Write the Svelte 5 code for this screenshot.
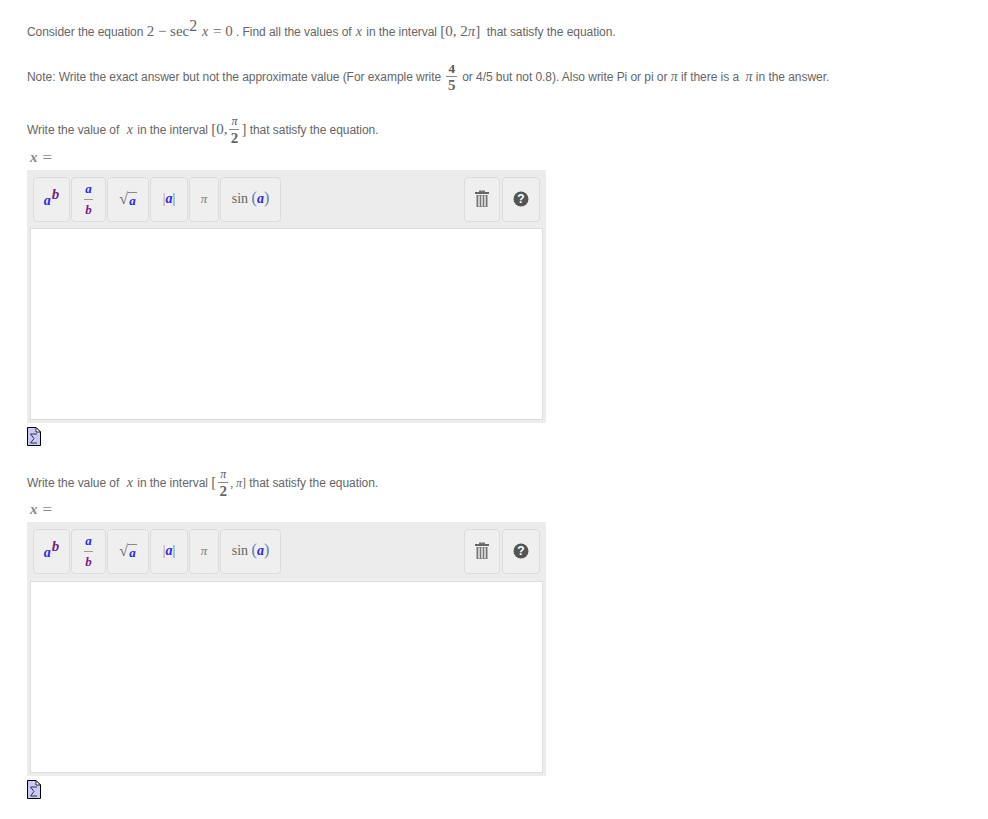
<script>
	const tools = [
		{ id: 'power', w: 37 },
		{ id: 'frac', w: 35 },
		{ id: 'sqrt', w: 42 },
		{ id: 'abs', w: 38 },
		{ id: 'pi', w: 30 },
		{ id: 'sin', w: 61 }
	];
</script>

{#snippet frac(top, bottom, it)}
	<span class="frac"><span class="num" class:it>{top}</span><span class="den">{bottom}</span></span>
{/snippet}

{#snippet editor()}
	<div class="var"><i class="vx">x</i><span class="eq">=</span></div>
	<div class="panel">
		<div class="toolbar">
			{#each tools as t}
				<button class="tool" style="width: {t.w}px">
					{#if t.id === 'power'}
						<span class="power"><i class="blue">a</i><i class="purple sup">b</i></span>
					{:else if t.id === 'frac'}
						<span class="tfrac"><i class="blue">a</i><i class="purple">b</i></span>
					{:else if t.id === 'sqrt'}
						<span class="root"><span class="radical">√</span><i class="blue over">a</i></span>
					{:else if t.id === 'abs'}
						<span class="abs"><span class="orange">|</span><i class="blue">a</i><span class="grey">|</span></span>
					{:else if t.id === 'pi'}
						<i class="pi">π</i>
					{:else}
						<span class="sin">sin <span class="paren">(</span><i class="blue">a</i><span class="paren">)</span></span>
					{/if}
				</button>
			{/each}
			<div class="right">
				<button class="tool side">
					<svg width="16" height="18" viewBox="0 0 16 18">
						<path d="M5 0.5h6v1.5H5z" fill="#777" />
						<rect x="1" y="2" width="14" height="2" fill="#666" />
						<rect x="2.5" y="5" width="11" height="12" fill="#777" />
						<path d="M5 5.5v11M8 5.5v11M11 5.5v11" stroke="#efefef" stroke-width="1.4" />
					</svg>
				</button>
				<button class="tool side help">
					<svg width="16" height="16" viewBox="0 0 16 16">
						<circle cx="8" cy="8" r="7.5" fill="#555" />
						<text x="8" y="12.2" text-anchor="middle" class="qm">?</text>
					</svg>
				</button>
			</div>
		</div>
		<div class="input"></div>
	</div>
	<svg class="sigma" width="14" height="19" viewBox="0 0 14 19">
		<path d="M.5 .5h8.5l4.5 4.5v13.5H.5z" fill="#c9c9f5" stroke="#000" />
		<path d="M9 .5v4.5h4.5z" fill="#fff" stroke="#000" stroke-width=".8" />
		<path d="M10 7H3.5l3.5 4.5-3.5 4.5H10" fill="none" stroke="#334" />
	</svg>
{/snippet}

<main>
	<p class="line first">
		Consider the equation <span class="math big">2 − sec<sup>2</sup> <i class="mi">x</i> = 0</span> . Find all the values of <i class="mi">x</i> in the interval <span class="math big">[0, 2<i>π</i>]</span> &nbsp;that satisfy the equation.
	</p>
	<p class="line note">
		Note: Write the exact answer but not the approximate value (For example write {@render frac('4', '5', false)} or 4/5 but not 0.8). Also write Pi or pi or <i class="mi">π</i> if there is a &nbsp;<i class="mi">π</i> in the answer.
	</p>
	<p class="line ask">
		Write the value of &nbsp;<i class="mi">x</i> in the interval <span class="math big">[0,</span>{@render frac('π', '2', true)}<span class="math big">]</span> that satisfy the equation.
	</p>
	{@render editor()}
	<p class="line ask second">
		Write the value of &nbsp;<i class="mi">x</i> in the interval <span class="math big">[</span>{@render frac('π', '2', true)}<span class="math">, <i>π</i>]</span> that satisfy the equation.
	</p>
	<div class="lower">
		{@render editor()}
	</div>
</main>

<style>
	:global(body) {
		margin: 0;
		background: #fff;
	}
	main {
		padding: 0 0 0 27px;
		font-family: "Liberation Sans", Arial, sans-serif;
		font-size: 12px;
		letter-spacing: -0.05px;
		color: #666;
	}
	.line {
		margin: 0;
		height: 20px;
		line-height: 20px;
		white-space: nowrap;
	}
	.first {
		padding-top: 21px;
	}
	.note {
		margin-top: 26px;
	}
	.note .mi {
		padding: 0;
	}
	.ask {
		margin-top: 32px;
	}
	.second {
		margin-top: 26px;
		height: 19px;
	}
	.math {
		font-family: "Liberation Serif", serif;
	}
	.big {
		font-size: 15px;
		letter-spacing: 0;
		font-weight: 400;
	}
	.big sup {
		font-size: 16px;
		line-height: 0;
		vertical-align: 5px;
	}
	.mi {
		font-family: "Liberation Serif", serif;
		font-style: italic;
		font-size: 14px;
		padding: 0 1px;
	}
	.frac {
		display: inline-flex;
		flex-direction: column;
		align-items: center;
		vertical-align: middle;
		font-family: "Liberation Serif", serif;
		margin: -6px 2px -6px 2px;
		color: #555;
	}
	.num {
		border-bottom: 1px solid #888;
		padding: 0 2px 1px;
		font-size: 13px;
		line-height: 13px;
		font-weight: 700;
	}
	.num.it {
		font-size: 12px;
		font-style: italic;
		font-weight: 400;
	}
	.den {
		font-size: 15px;
		line-height: 15px;
		padding-top: 1px;
		font-weight: 700;
		color: #666;
	}
	.var {
		margin-top: 10px;
		height: 20px;
		line-height: 16px;
		font-size: 13px;
		color: #888;
		padding-left: 3px;
		font-family: "Liberation Serif", serif;
	}
	.vx {
		font-size: 15px;
		font-weight: 700;
	}
	.eq {
		font-size: 17px;
		margin-left: 5px;
		vertical-align: -1px;
	}
	.panel {
		width: 519px;
		height: 253px;
		margin-top: 1px;
		background: #ececec;
		box-sizing: border-box;
		padding: 7px 3px 3px;
	}
	.lower .panel {
		height: 254px;
	}
	.lower .input {
		margin-top: 7px;
	}
	.toolbar {
		display: flex;
		gap: 1px;
		height: 45px;
		padding-left: 3px;
		padding-right: 3px;
	}
	.tool {
		height: 45px;
		padding: 0 0 2px;
		border: 1px solid #dcdcdc;
		border-radius: 4px;
		background: #efefef;
		display: flex;
		align-items: center;
		justify-content: center;
		font-family: "Liberation Serif", serif;
		font-size: 14px;
		color: #666;
	}
	.right {
		margin-left: auto;
		display: flex;
		gap: 2px;
	}
	.side {
		width: 36px;
	}
	.help {
		width: 38px;
	}
	.qm {
		font-family: "Liberation Sans", sans-serif;
		font-size: 12px;
		font-weight: 700;
		fill: #fff;
	}
	.blue {
		color: #2a2af0;
		font-weight: 700;
	}
	.purple {
		color: #7a1f8a;
		font-weight: 700;
	}
	.orange {
		color: #c98a3a;
	}
	.grey {
		color: #666;
	}
	.power {
		position: relative;
		top: 2px;
		white-space: nowrap;
	}
	.power i:first-child {
		font-size: 14px;
		margin-right: 1px;
	}
	.sup {
		font-size: 15px;
		position: relative;
		top: -6px;
	}
	.tfrac {
		display: flex;
		flex-direction: column;
		align-items: center;
		font-size: 13px;
		line-height: 13px;
	}
	.tfrac i:first-child {
		border-bottom: 1px solid #999;
		padding: 0 1px 4px;
		margin-bottom: 3px;
	}
	.root {
		font-size: 13px;
		display: flex;
		align-items: flex-end;
	}
	.radical {
		color: #666;
		font-size: 16px;
		line-height: 18px;
	}
	.over {
		border-top: 1px solid #888;
		padding: 0 1px;
		line-height: 15px;
	}
	.pi {
		font-size: 13px;
		color: #777;
	}
	.sin {
		font-size: 14px;
		white-space: nowrap;
		padding-bottom: 2px;
	}
	.paren {
		color: #5a7fb0;
		font-size: 16px;
	}
	.input {
		margin-top: 6px;
		height: 192px;
		box-sizing: border-box;
		background: #fff;
		border: 1px solid #ddd;
	}
	.sigma {
		display: block;
		margin-top: 4px;
	}
</style>
